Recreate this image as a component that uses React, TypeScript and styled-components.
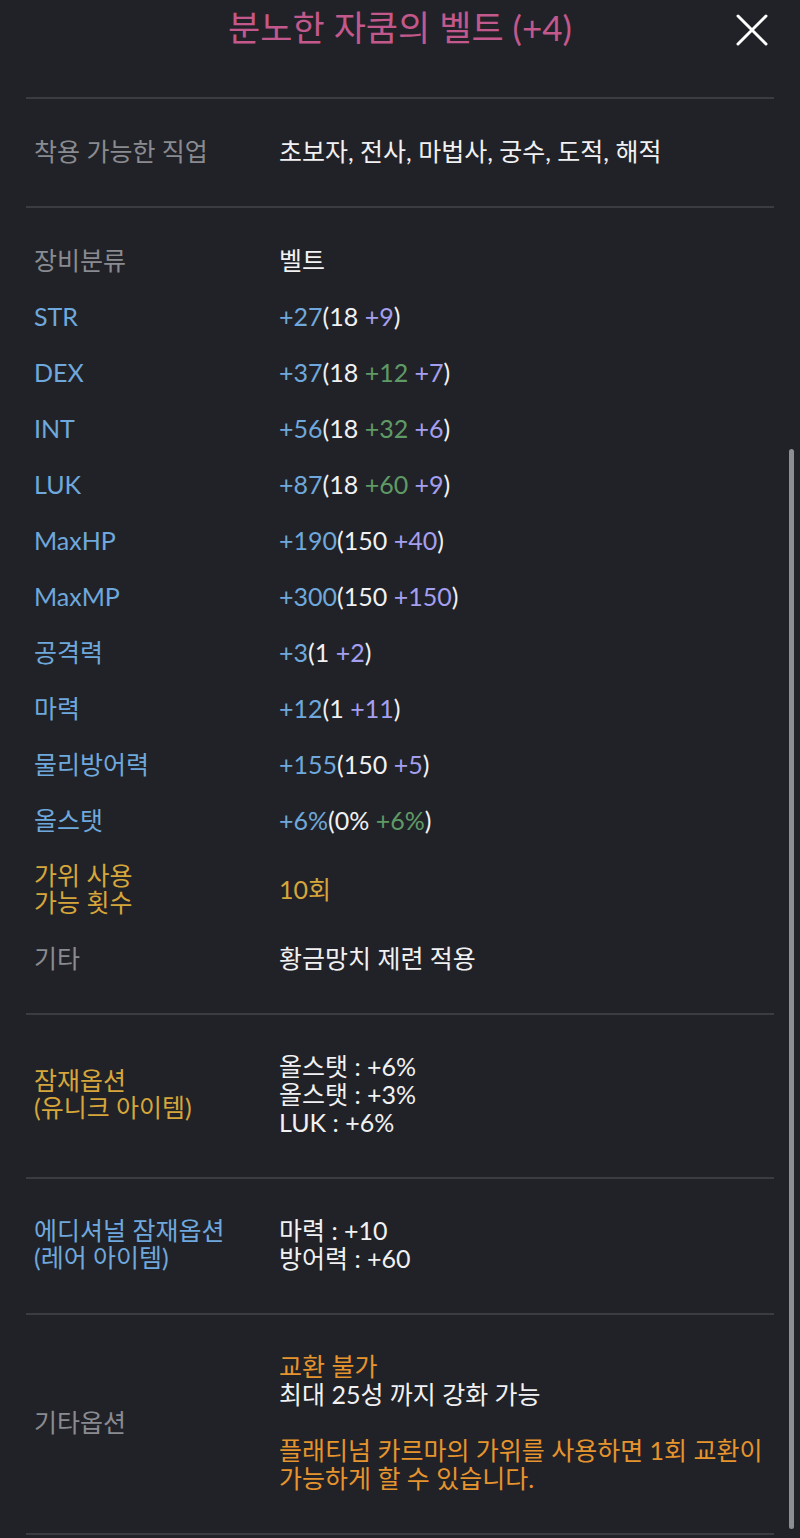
import React from "react";
import styled, { createGlobalStyle } from "styled-components";

const colors = {
  bg: "#212227",
  line: "#3b3c42",
  gray: "#8a8b91",
  white: "#f1f1f3",
  blue: "#6fa8dc",
  purple: "#a59ff0",
  green: "#5f9a66",
  gold: "#d6a63b",
  orange: "#e6942d",
  pink: "#c2588b",
};

type Tone = keyof typeof colors;

const GlobalStyle = createGlobalStyle`
  html, body {
    margin: 0;
    background: ${colors.bg};
  }
  body {
    font-family: Lato, "Noto Sans CJK KR", "Noto Sans", sans-serif;
    color: ${colors.white};
  }
`;

const Page = styled.div`
  position: relative;
  min-height: 1538px;
  background: ${colors.bg};
`;

const Header = styled.header`
  display: grid;
  grid-template-columns: 1fr auto 1fr;
  align-items: start;
  height: 97px;
  padding: 8px 32px 0;
  box-sizing: border-box;
`;

const Title = styled.h1`
  grid-column: 2;
  margin: 0;
  font-size: 35px;
  font-weight: 400;
  line-height: 38px;
  white-space: nowrap;
  color: ${colors.pink};
`;

const CloseButton = styled.button`
  grid-column: 3;
  justify-self: end;
  display: flex;
  padding: 0;
  margin-top: 6px;
  border: none;
  background: none;
  cursor: pointer;
`;

const Content = styled.main`
  padding: 0 26px;
`;

const Section = styled.section<{ $loose?: boolean }>`
  padding: ${(p) => (p.$loose ? "26px 0 25px" : "25px 0")};
  border-top: 2px solid ${colors.line};

  &:last-child {
    border-bottom: 2px solid ${colors.line};
  }
`;

const Row = styled.div`
  display: grid;
  grid-template-columns: 253px 1fr;
  align-items: center;
  padding: 12px 0 16px;
  font-size: 25px;
  line-height: 28px;
  word-break: keep-all;
`;

const Label = styled.div<{ $tone: Tone; $tight?: boolean }>`
  padding-left: 8px;
  color: ${(p) => colors[p.$tone]};
  line-height: ${(p) => (p.$tight ? "27px" : "28px")};
`;

const Value = styled.div<{ $tone?: Tone }>`
  color: ${(p) => colors[p.$tone ?? "white"]};
`;

const Line = styled.div<{ $tone?: Tone }>`
  color: ${(p) => (p.$tone ? colors[p.$tone] : "inherit")};
`;

const Gap = styled.div`
  height: 28px;
`;

const Part = styled.span<{ $tone: Tone }>`
  color: ${(p) => colors[p.$tone]};
`;

const ScrollThumb = styled.div`
  position: absolute;
  top: 449px;
  left: 789px;
  width: 5px;
  height: 1080px;
  border-radius: 3px;
  background: #8d8e93;
`;

type Stat = {
  name: string;
  total: string;
  base: string;
  extra?: string;
  bonus?: string;
};

const stats: Stat[] = [
  { name: "STR", total: "+27", base: "18", bonus: "+9" },
  { name: "DEX", total: "+37", base: "18", extra: "+12", bonus: "+7" },
  { name: "INT", total: "+56", base: "18", extra: "+32", bonus: "+6" },
  { name: "LUK", total: "+87", base: "18", extra: "+60", bonus: "+9" },
  { name: "MaxHP", total: "+190", base: "150", bonus: "+40" },
  { name: "MaxMP", total: "+300", base: "150", bonus: "+150" },
  { name: "공격력", total: "+3", base: "1", bonus: "+2" },
  { name: "마력", total: "+12", base: "1", bonus: "+11" },
  { name: "물리방어력", total: "+155", base: "150", bonus: "+5" },
  { name: "올스탯", total: "+6%", base: "0%", extra: "+6%" },
];

const StatRow = ({ stat }: { stat: Stat }) => (
  <Row>
    <Label $tone="blue">{stat.name}</Label>
    <Value>
      <Part $tone="blue">{stat.total}</Part>({stat.base}
      {stat.extra && <Part $tone="green"> {stat.extra}</Part>}
      {stat.bonus && <Part $tone="purple"> {stat.bonus}</Part>})
    </Value>
  </Row>
);

const CloseIcon = () => (
  <svg width="32" height="32" viewBox="0 0 32 32">
    <path d="M2 2 L30 30 M30 2 L2 30" stroke="#ffffff" strokeWidth="3" strokeLinecap="round" />
  </svg>
);

export default function App() {
  return (
    <Page>
      <GlobalStyle />
      <Header>
        <Title>분노한 자쿰의 벨트 (+4)</Title>
        <CloseButton aria-label="닫기">
          <CloseIcon />
        </CloseButton>
      </Header>
      <Content>
        <Section $loose>
          <Row>
            <Label $tone="gray">착용 가능한 직업</Label>
            <Value>초보자, 전사, 마법사, 궁수, 도적, 해적</Value>
          </Row>
        </Section>
        <Section $loose>
          <Row>
            <Label $tone="gray">장비분류</Label>
            <Value>벨트</Value>
          </Row>
          {stats.map((s) => (
            <StatRow key={s.name} stat={s} />
          ))}
          <Row>
            <Label $tone="gold" $tight>
              가위 사용
              <br />
              가능 횟수
            </Label>
            <Value $tone="gold">10회</Value>
          </Row>
          <Row>
            <Label $tone="gray">기타</Label>
            <Value>황금망치 제련 적용</Value>
          </Row>
        </Section>
        <Section>
          <Row>
            <Label $tone="gold" $tight>
              잠재옵션
              <br />
              (유니크 아이템)
            </Label>
            <Value>
              <Line>올스탯 : +6%</Line>
              <Line>올스탯 : +3%</Line>
              <Line>LUK : +6%</Line>
            </Value>
          </Row>
        </Section>
        <Section>
          <Row>
            <Label $tone="blue" $tight>
              에디셔널 잠재옵션
              <br />
              (레어 아이템)
            </Label>
            <Value>
              <Line>마력 : +10</Line>
              <Line>방어력 : +60</Line>
            </Value>
          </Row>
        </Section>
        <Section>
          <Row>
            <Label $tone="gray">기타옵션</Label>
            <Value>
              <Line $tone="orange">교환 불가</Line>
              <Line>최대 25성 까지 강화 가능</Line>
              <Gap />
              <Line $tone="orange">플래티넘 카르마의 가위를 사용하면 1회 교환이 가능하게 할 수 있습니다.</Line>
            </Value>
          </Row>
        </Section>
      </Content>
      <ScrollThumb />
    </Page>
  );
}
